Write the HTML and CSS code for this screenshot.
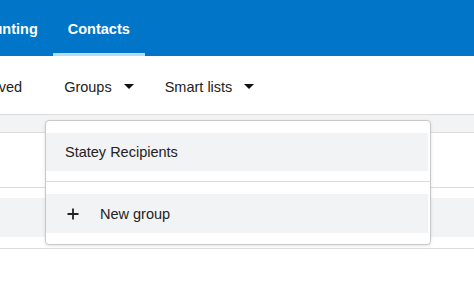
FILE: index.html
```html
<!DOCTYPE html>
<html>
	<head>
		<title>Contacts</title>
		<meta charset="utf-8">
		<link rel="stylesheet" href="styles.css">
	</head>

	<body>
		<div class="topbar">
			<div class="tabs">
				<a class="tab">Accounting</a>
				<a class="tab active">Contacts</a>
			</div>
		</div>

		<div class="toolbar">
			<div class="tool saved">Saved</div>
			<div class="tool">Groups <span class="caret"></span></div>
			<div class="tool">Smart lists <span class="caret"></span></div>

			<div class="dropdown">
				<div class="item">Statey Recipients</div>
				<div class="divider"></div>
				<div class="item add">
					<svg class="plus" width="12" height="12" viewBox="0 0 12 12">
						<path d="M6 0.5V11.5M0.5 6H11.5" stroke="#222" stroke-width="1.8" fill="none"/>
					</svg>
					New group
				</div>
			</div>
		</div>

		<div class="table">
			<div class="row head"></div>
			<div class="row first"></div>
			<div class="row second"><div class="band"></div></div>
		</div>
	</body>
</html>
```

FILE: styles.css
```css
html,body {
	margin: 0;
	padding: 0;
	background-color: #fff;
	overflow: hidden;
}

body {
	font-family: 'Liberation Sans', Arial, sans-serif;
	font-size: 14.5px;
	color: #222;
}

.topbar {
	background-color: #0175c8;
	height: 56px;
}

.tabs {
	display: flex;
	height: 56px;
	margin-left: -57px;
}

.tab {
	display: flex;
	align-items: center;
	padding: 5px 15px 0;
	font-weight: bold;
	color: #fff;
	border-bottom: 3px solid transparent;
	box-sizing: border-box;
}

.tab.active {
	border-bottom-color: #b6dcf4;
}

.toolbar {
	position: relative;
	display: flex;
	align-items: center;
	height: 59px;
	border-bottom: 1px solid #dcdcdc;
	margin-left: -19px;
	padding-top: 3px;
	box-sizing: border-box;
}

.tool {
	display: flex;
	align-items: center;
	margin-right: 31px;
}

.tool.saved {
	margin-right: 42px;
}

.caret {
	width: 0;
	height: 0;
	margin-left: 12px;
	border-left: 5px solid transparent;
	border-right: 5px solid transparent;
	border-top: 5px solid #111;
}

.row {
	border-bottom: 1px solid #dcdcdc;
}

.row.head {
	height: 17px;
	background-color: #f2f3f5;
}

.row.first {
	height: 54px;
}

.row.second {
	padding: 10px 0 11px;
}

.band {
	height: 39px;
	background-color: #f2f3f5;
}

.dropdown {
	position: absolute;
	top: 64px;
	left: 64px;
	width: 386px;
	box-sizing: border-box;
	background-color: #fff;
	border: 1px solid #c9c9c9;
	border-radius: 4px;
	box-shadow: 0 1px 3px rgba(0,0,0,0.12);
	padding: 12px 0 11px;
}

.item {
	display: flex;
	align-items: center;
	height: 38px;
	padding-left: 19px;
	background-color: #f2f3f5;
	margin-right: 2px;
}

.item.add {
	height: 39px;
	padding-left: 21px;
}

.plus {
	margin-right: 21px;
}

.divider {
	height: 1px;
	background-color: #dcdcdc;
	margin: 10px 0 12px;
}
```
